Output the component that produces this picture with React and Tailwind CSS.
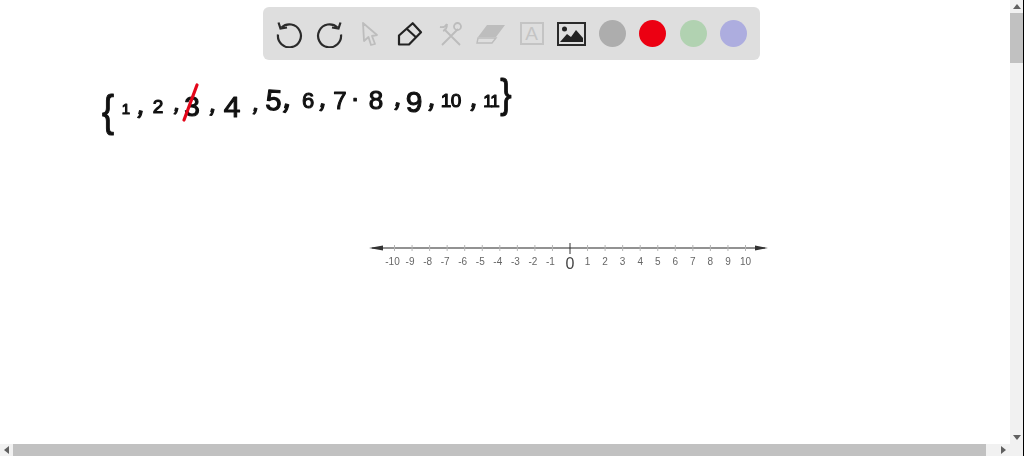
import React from "react";

// handwritten ink on the board, glyph by glyph: [char, x, baseline y, size, rotate]
const ink = [
  ["1", 126, 114, 15, 0],
  [",", 140, 114, 30, 15],
  ["2", 158, 113, 19, 0],
  [",", 176, 111, 26, 15],
  ["3", 192, 116, 28, 0],
  [",", 212, 112, 28, 15],
  ["4", 232, 117, 30, 0],
  [",", 255, 111, 26, 15],
  ["5", 273, 110, 29, 4],
  [",", 286, 108, 36, 15],
  ["6", 308, 108, 22, 0],
  [",", 322, 107, 30, 15],
  ["7", 340, 109, 24, 0],
  [".", 355, 101, 26, 0],
  ["8", 376, 109, 26, 0],
  [",", 397, 106, 30, 15],
  ["9", 414, 112, 30, 0],
  [",", 431, 107, 30, 15],
  ["1", 446, 107, 19, 0],
  ["0", 456, 107, 19, 0],
  [",", 473, 107, 30, 15],
  ["1", 488, 107, 17, 0],
  ["1", 495, 107, 17, 0],
];

const ticks = [-10, -9, -8, -7, -6, -5, -4, -3, -2, -1, 0, 1, 2, 3, 4, 5, 6, 7, 8, 9, 10];

const Circle = ({ color }) => <div className={`w-[27px] h-[27px] rounded-full ${color}`} />;

const Cell = ({ children }) => (
  <div className="w-[40.4px] h-full flex items-center justify-center shrink-0">{children}</div>
);

const Toolbar = () => (
  <div className="w-[497px] h-[53px] ml-[263px] mt-[7px] pl-[6px] flex items-center rounded-md bg-[#dedede]">
    <Cell>
      <svg width="28" height="28" viewBox="0 1 28 28" fill="none" stroke="#2b2b2b" strokeWidth="2.2">
        <path d="M6.5 8.5A11.5 11.5 0 1 1 3 15.5" />
        <path d="M3.5 3.5 L5.5 9.5 L12 8.5" />
      </svg>
    </Cell>
    <Cell>
      <svg width="28" height="28" viewBox="0 1 28 28" fill="none" stroke="#2b2b2b" strokeWidth="2.2">
        <path d="M21.5 8.5A11.5 11.5 0 1 0 25 15.5" />
        <path d="M24.5 3.5 L22.5 9.5 L16 8.5" />
      </svg>
    </Cell>
    <Cell>
      <svg width="20" height="26" viewBox="0 0 20 26" fill="none" stroke="#bdbdbd" strokeWidth="1.8" strokeLinejoin="round">
        <path d="M3 2 L17 14 L12 15 L15 23 L11 24 L8.5 16 L4 20 Z" />
      </svg>
    </Cell>
    <Cell>
      <svg width="26" height="26" viewBox="0 0 26 26" fill="none" stroke="#222222" strokeWidth="2.2" strokeLinejoin="round">
        <path d="M2 14.5 L15.7 2.2 L24 11.2 L12 23.5 L2 23.5 Z" />
        <path d="M9.7 7.8 L19 16.2" />
      </svg>
    </Cell>
    <Cell>
      <svg width="26" height="26" viewBox="0 0 26 26" fill="none" stroke="#bcbcbc" strokeWidth="1.8">
        <path d="M6 8 L22 24 M20 8 L4 24" />
        <path d="M2 6 Q7 7 9 3 M5 10 Q9 9 9 3" />
        <circle cx="19.5" cy="5.5" r="3.5" />
      </svg>
    </Cell>
    <Cell>
      <svg width="30" height="20" viewBox="0 0 30 20">
        <path d="M11 1 L29 1 L20 13 L2 13 Z" fill="#bdbdbd" />
        <path d="M2 14 L20 14 L16 19 L1 19 Z" fill="none" stroke="#bdbdbd" strokeWidth="1.4" />
      </svg>
    </Cell>
    <Cell>
      <div className="w-[24px] h-[23px] border-2 border-[#c4c4c4] flex items-center justify-center text-[19px] leading-none text-[#c4c4c4] font-['Liberation_Sans',sans-serif]">
        A
      </div>
    </Cell>
    <Cell>
      <svg width="29" height="24" viewBox="0 0 29 24">
        <rect x="1" y="1" width="27" height="22" fill="none" stroke="#2b2b2b" strokeWidth="2" />
        <circle cx="7.5" cy="7" r="2.5" fill="#222222" />
        <path d="M3 20 L10 12 L14 15 L19 8 L26 16 L26 20 Z" fill="#222222" />
      </svg>
    </Cell>
    <Cell><Circle color="bg-[#adadad]" /></Cell>
    <Cell><Circle color="bg-[#ec0012]" /></Cell>
    <Cell><Circle color="bg-[#b1d2b1]" /></Cell>
    <Cell><Circle color="bg-[#adaddf]" /></Cell>
  </div>
);

const Handwriting = () => (
  <svg width="420" height="62" viewBox="100 78 420 62" className="block ml-[100px] mt-[18px] overflow-visible blur-[0.4px]">
    <g
      fontFamily="'Liberation Sans', sans-serif"
      fill="#111111"
      stroke="#111111"
      strokeLinejoin="round"
      textAnchor="middle"
    >
      <text x="108" y="0" fontSize="36" strokeWidth="0.9" transform="translate(0 126) scale(1 1.22)">{"{"}</text>
      <text x="506" y="0" fontSize="34" strokeWidth="0.9" transform="translate(0 108) scale(1 1.22)">{"}"}</text>
      {ink.map(([ch, x, y, size, rot], i) => (
        <text key={i} x={x} y={y} fontSize={size} strokeWidth="1.1" transform={`rotate(${rot} ${x} ${y})`}>
          {ch}
        </text>
      ))}
    </g>
    <path d="M197 85 L184 120" stroke="#e4061a" strokeWidth="3.2" strokeLinecap="round" />
  </svg>
);

const NumberLine = () => (
  <svg width="410" height="40" viewBox="365 240 410 40" className="block ml-[365px] mt-[100px] blur-[0.3px]">
    <line x1="372" y1="248" x2="765" y2="248" stroke="#6e6e6e" strokeWidth="1.4" />
    <path d="M369 248 L383 245.5 L383 250.5 Z" fill="#333333" />
    <path d="M768 248 L755 245.5 L755 250.5 Z" fill="#333333" />
    {ticks.map((n) => {
      const x = 570 + n * 17.55;
      return (
        <g key={n}>
          <line
            x1={x}
            y1={n === 0 ? 243 : 245}
            x2={x}
            y2={n === 0 ? 254 : 251}
            stroke={n === 0 ? "#333333" : "#b5b5b5"}
            strokeWidth="1"
          />
          <text
            x={n < 0 ? x - 2 : x}
            y={n === 0 ? 269 : 265}
            fontSize={n === 0 ? 16 : 10}
            textAnchor="middle"
            fill={n === 0 ? "#444444" : "#666666"}
            fontFamily="'Liberation Sans', sans-serif"
          >
            {n}
          </text>
        </g>
      );
    })}
  </svg>
);

const Arrow = ({ dir }) => {
  const points = {
    up: "0,5 4,0 8,5",
    down: "0,0 8,0 4,5",
    left: "5,0 5,8 0,4",
    right: "0,0 0,8 5,4",
  };
  const box = dir === "up" || dir === "down" ? "w-[8px] h-[5px]" : "w-[5px] h-[8px]";
  const vb = dir === "up" || dir === "down" ? "0 0 8 5" : "0 0 5 8";
  return (
    <svg viewBox={vb} className={box}>
      <polygon points={points[dir]} fill="#606060" />
    </svg>
  );
};

const App = () => {
  return (
    <div className="w-[1024px] h-[456px] flex flex-col bg-white overflow-hidden">
      <div className="flex flex-1 min-h-0">
        <div className="flex-1 min-w-0">
          <Toolbar />
          <Handwriting />
          <NumberLine />
        </div>
        {/* vertical scrollbar */}
        <div className="w-[14px] flex flex-col bg-[#f1f1f1] border-r border-black">
          <div className="h-[13px] flex items-center justify-center"><Arrow dir="up" /></div>
          <div className="h-[50px] bg-[#c1c1c1]" />
          <div className="flex-1" />
          <div className="h-[13px] flex items-center justify-center"><Arrow dir="down" /></div>
        </div>
      </div>
      {/* horizontal scrollbar */}
      <div className="h-[12px] flex bg-[#f1f1f1]">
        <div className="w-[13px] flex items-center justify-center"><Arrow dir="left" /></div>
        <div className="w-[973px] bg-[#c1c1c1]" />
        <div className="flex-1" />
        <div className="w-[13px] flex items-center justify-center"><Arrow dir="right" /></div>
        <div className="w-[14px] border-r border-black" />
      </div>
    </div>
  );
};

export default App;
